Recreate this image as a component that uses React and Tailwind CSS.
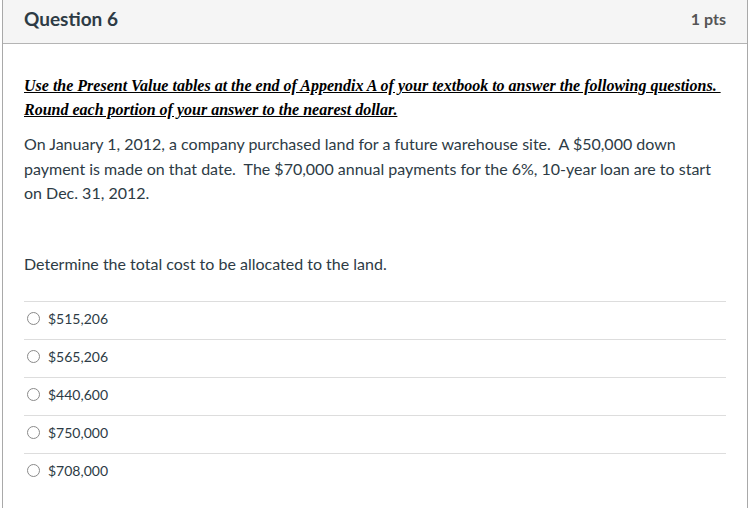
import React from "react";

const answers = ["$515,206", "$565,206", "$440,600", "$750,000", "$708,000"];

const App = () => {
  return (
    <div className="w-[751px] h-[508px] bg-white overflow-hidden font-['Lato',sans-serif] text-[#2d3b45]">
      <div className="ml-[2px] w-[746px] h-[508px] border-x border-[#a9a9a9]">
        {/* header */}
        <div className="h-[44px] bg-[#f5f5f5] border-b border-[#b4b4b4] px-[21px] pb-[5px] flex items-center justify-between">
          <span className="text-[19px] font-bold text-[#2d3b45]">Question 6</span>
          <span className="text-[16px] font-bold text-[#555555]">1 pts</span>
        </div>

        <div className="px-[21px] pt-[30px]">
          <p className="font-['Liberation_Serif',serif] italic font-bold underline text-[16px] leading-[23.5px] text-[#000000]">
            Use the Present Value tables at the end of Appendix A of your textbook to answer the following questions.&nbsp;
            <br />
            Round each portion of your answer to the nearest dollar.
          </p>

          <p className="mt-[11px] text-[16px] leading-[24.5px] pr-[10px]">
            On January 1, 2012, a company purchased land for a future warehouse site.&nbsp; A $50,000 down payment is made on that date.&nbsp; The $70,000 annual payments for the 6%, 10-year loan are to start on Dec. 31, 2012.
          </p>

          <p className="mt-[11px] h-[24px]">&nbsp;</p>

          <p className="mt-[11px] text-[16px] leading-[24px]">
            Determine the total cost to be allocated to the land.
          </p>

          <div className="mt-[25px]">
            {answers.map((a) => (
              <div key={a} className="h-[38px] border-t border-[#dddddd] flex items-center pl-[3px] pb-[4px] gap-[8px]">
                <span className="w-[13px] h-[13px] rounded-full border border-[#8a8a8a] bg-white" />
                <span className="text-[14px]">{a}</span>
              </div>
            ))}
          </div>
        </div>
      </div>
    </div>
  );
};

export default App;
